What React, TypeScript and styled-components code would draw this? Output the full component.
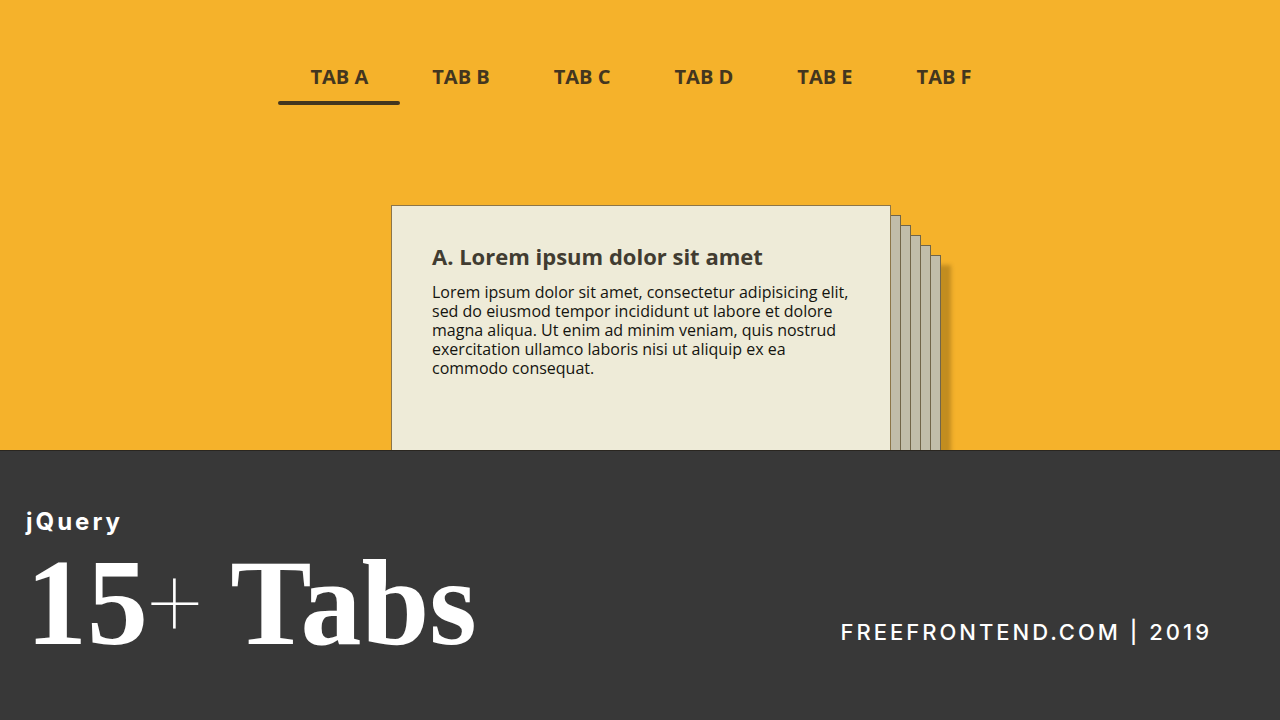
import React, { useState } from "react";
import styled, { createGlobalStyle } from "styled-components";

const ink = "#43361f";
const sheet = "#c1bdaa";
const sheetEdge = "#716549";

const GlobalStyle = createGlobalStyle`
  *, *::before, *::after { box-sizing: border-box; }
  body {
    margin: 0;
    background: #383838;
    font-family: "Open Sans", "Noto Sans", sans-serif;
  }
`;

const Page = styled.div`
  display: grid;
  grid-template-rows: 5fr 3fr;
  min-height: 100vh;
`;

const Stage = styled.main`
  display: flex;
  flex-direction: column;
  align-items: center;
  gap: 100px;
  padding: 56px 16px 0 18px;
  overflow: hidden;
  background: #f5b22b;
`;

const TabList = styled.div`
  display: flex;
  flex-wrap: wrap;
  justify-content: center;
`;

const Tab = styled.button<{ $active: boolean }>`
  padding: 7px 32px 0;
  border: 0;
  background: transparent;
  color: ${ink};
  font: 700 20px/28px "Open Sans", "Noto Sans", sans-serif;
  text-transform: uppercase;
  cursor: pointer;

  &::after {
    content: "";
    display: block;
    height: 4px;
    margin: 10px -32px 0;
    border-radius: 2px;
    background: ${(p) => (p.$active ? ink : "transparent")};
  }
`;

/* Each pair of shadows is one sheet of the stack: its face, then its edge. */
const stack = [1, 2, 3, 4, 5]
  .map((n) => {
    const d = n * 10;
    return `${d}px ${d}px 0 -1px ${sheet}, ${d}px ${d}px 0 0 ${sheetEdge}`;
  })
  .join(", ");

const Card = styled.section`
  flex: 1 0 auto;
  width: 100%;
  max-width: 500px;
  padding: 35px 40px;
  border: 1px solid #8c7649;
  border-bottom: 0;
  background: #eeebd8;
  box-shadow: ${stack}, 60px 60px 4px 0 rgba(60, 40, 0, 0.27);
`;

const CardTitle = styled.h2`
  margin: 0 0 12px;
  color: #413c31;
  font-size: 22px;
  line-height: 30px;
  font-weight: 700;
`;

const CardText = styled.p`
  margin: 0;
  color: #14140f;
  font-size: 16px;
  line-height: 19px;
`;

const Banner = styled.footer`
  display: flex;
  flex-wrap: wrap;
  align-items: flex-end;
  justify-content: space-between;
  gap: 24px;
  padding: 56px 68px 50px 26px;
  border-top: 1px solid #2a2620;
  background: #383838;
  color: #fff;
`;

const Topic = styled.p`
  margin: 0;
  font: 700 24px/28px Inter, sans-serif;
  letter-spacing: 3px;
`;

const Title = styled.h1`
  margin: 0;
  font: 700 122px/134px "Liberation Serif", serif;
`;

const Plus = styled.span`
  font: 100 96px/1 Roboto, sans-serif;
  vertical-align: 8px;
`;

const Credit = styled.p`
  margin: 0;
  padding-bottom: 22px;
  font: 500 22px/32px Inter, sans-serif;
  letter-spacing: 3px;
`;

const letters = ["A", "B", "C", "D", "E", "F"];

export default function App() {
  const [active, setActive] = useState("A");

  return (
    <>
      <GlobalStyle />
      <Page>
        <Stage>
          <TabList role="tablist" aria-label="Pages">
            {letters.map((letter) => (
              <Tab
                key={letter}
                type="button"
                role="tab"
                id={`tab-${letter}`}
                aria-selected={letter === active}
                aria-controls="panel"
                $active={letter === active}
                onClick={() => setActive(letter)}
              >
                Tab {letter}
              </Tab>
            ))}
          </TabList>
          <Card role="tabpanel" id="panel" aria-labelledby={`tab-${active}`}>
            <CardTitle>{active}. Lorem ipsum dolor sit amet</CardTitle>
            <CardText>
              Lorem ipsum dolor sit amet, consectetur adipisicing elit, sed do
              eiusmod tempor incididunt ut labore et dolore magna aliqua. Ut
              enim ad minim veniam, quis nostrud exercitation ullamco laboris
              nisi ut aliquip ex ea commodo consequat.
            </CardText>
          </Card>
        </Stage>
        <Banner>
          <div>
            <Topic>jQuery</Topic>
            <Title>
              15<Plus>+</Plus> Tabs
            </Title>
          </div>
          <Credit>FREEFRONTEND.COM | 2019</Credit>
        </Banner>
      </Page>
    </>
  );
}
